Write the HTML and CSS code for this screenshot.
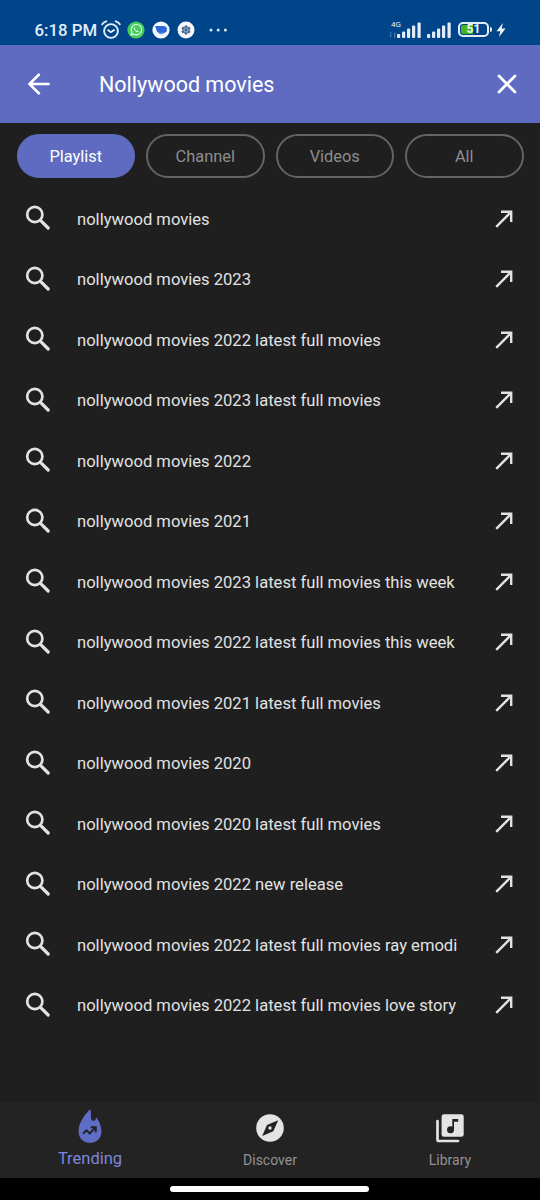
FILE: index.html
```html
<!DOCTYPE html>
<html lang="en">
<head>
<meta charset="utf-8">
<title>Search</title>
<link rel="stylesheet" href="styles.css">
</head>
<body>
<svg class="defs" width="0" height="0">
  <symbol id="search" viewBox="0 0 26 26"><circle cx="9.8" cy="9.5" r="7.6" fill="none" stroke="currentColor" stroke-width="2.7"/><path d="M15.5 15.3L23.2 23" stroke="currentColor" stroke-width="3.2" stroke-linecap="round"/></symbol>
  <symbol id="open" viewBox="0 0 18 18"><path d="M1.2 16.8L15.6 2.4M6 1.8H16.2V12" fill="none" stroke="currentColor" stroke-width="2.4"/></symbol>
</svg>
<div class="screen">
  <div class="status">
    <span class="time">6:18 PM</span>
    <svg class="alarm" width="20" height="20" viewBox="0 0 20 20" fill="none" stroke="#e3edf7" stroke-width="1.9" stroke-linecap="round"><circle cx="10" cy="11" r="6.9"/><path d="M1.2 4.3Q2.6 2 5.2 1.3M14.8 1.3Q17.4 2 18.8 4.3M7.2 10.2L9.8 12.2L12.9 10.1"/></svg>
    <svg class="whatsapp" width="18" height="18" viewBox="0 0 18 18"><circle cx="9" cy="9" r="8.6" fill="#45ce5e"/><path d="M4.1 13.9L4.9 11.2A5.2 5.2 0 1 1 6.9 13.2Z" fill="none" stroke="#e4f8e8" stroke-width="1.1"/><path d="M6.9 6.4Q6.3 7.8 8 9.7Q9.9 11.7 11.4 11.1L11.7 10.3L10.3 9.5L9.6 10.1Q8.3 9.5 7.9 8.3L8.4 7.7L7.7 6.2Z" fill="#e4f8e8"/></svg>
    <svg class="messages" width="18" height="18" viewBox="0 0 18 18"><circle cx="9" cy="9" r="8.6" fill="#f5f8ff"/><path d="M2.9 5H11.2Q15 5.2 15 8.4Q15 11.8 11.4 12H8Q4.5 11.8 4.2 8.3Q4.1 6.7 2.9 5Z" fill="#2e68d9"/><path d="M6.2 11.5Q9.5 12.4 12.6 11.5Q11.8 13.4 9.4 13.4Q7 13.4 6.2 11.5Z" fill="#77a2f2"/></svg>
    <svg class="gear" width="18" height="18" viewBox="0 0 18 18"><circle cx="9" cy="9" r="8.5" fill="#f5f7fa"/><path d="M9 4.4V13.6M5 6.7L13 11.3M13 6.7L5 11.3" stroke="#455d7b" stroke-width="2.2"/><circle cx="9" cy="9" r="3.1" fill="#7fa0cb" stroke="#526f94" stroke-width="1.2"/><circle cx="9" cy="9" r="1.2" fill="#425b7a"/></svg>
    <svg class="dots" width="19" height="4" viewBox="0 0 19 4" fill="#dce8f4"><circle cx="2" cy="2" r="1.5"/><circle cx="9.2" cy="2" r="1.5"/><circle cx="16.4" cy="2" r="1.5"/></svg>
    <span class="network"><span class="gen">4G</span><svg width="8" height="6" viewBox="0 0 8 6" fill="none" stroke="#4f81b5"><path d="M1.8 0V5L.4 3.6M5.6 6V1L7 2.4"/></svg></span>
    <svg class="signal" width="24" height="16" viewBox="0 0 24 16" fill="#e3edf7"><rect y="12" width="3.2" height="4" rx="1"/><rect x="5" y="9.5" width="3.2" height="6.5" rx="1"/><rect x="10" y="6.5" width="3.2" height="9.5" rx="1"/><rect x="15" y="3.5" width="3.2" height="12.5" rx="1"/><rect x="20.5" y=".5" width="3.2" height="15.5" rx="1"/></svg>
    <svg class="signal second" width="24" height="16" viewBox="0 0 24 16" fill="#e3edf7"><rect y="12" width="3.2" height="4" rx="1"/><rect x="5" y="9.5" width="3.2" height="6.5" rx="1"/><rect x="10" y="6.5" width="3.2" height="9.5" rx="1"/><rect x="15" y="3.5" width="3.2" height="12.5" rx="1"/><rect x="20.5" y=".5" width="3.2" height="15.5" rx="1"/></svg>
    <span class="battery">51</span><span class="nub"></span>
    <svg class="bolt" width="10" height="14" viewBox="0 0 10 14"><path d="M7 0L.4 8.2H4.4L3 14L9.6 5.6H5.6Z" fill="#f0f5fa"/></svg>
  </div>

  <header class="bar">
    <svg class="back" width="22" height="22" viewBox="0 0 22 22" fill="none" stroke="#fff" stroke-width="2.6" stroke-linecap="round" stroke-linejoin="round"><path d="M20.6 11H1.8M10.9 1.6L1.5 11L10.9 20.4"/></svg>
    <span class="query">Nollywood movies</span>
    <svg class="clear" width="20" height="20" viewBox="0 0 20 20" fill="none" stroke="#fff" stroke-width="2.8" stroke-linecap="round"><path d="M2 2L18 18M18 2L2 18"/></svg>
  </header>

  <div class="filters">
    <span class="pill active">Playlist</span><span class="pill">Channel</span><span class="pill">Videos</span><span class="pill">All</span>
  </div>

  <ul class="results">
    <li><svg class="search"><use href="#search"/></svg><span>nollywood movies</span><svg class="open"><use href="#open"/></svg></li>
    <li><svg class="search"><use href="#search"/></svg><span>nollywood movies 2023</span><svg class="open"><use href="#open"/></svg></li>
    <li><svg class="search"><use href="#search"/></svg><span>nollywood movies 2022 latest full movies</span><svg class="open"><use href="#open"/></svg></li>
    <li><svg class="search"><use href="#search"/></svg><span>nollywood movies 2023 latest full movies</span><svg class="open"><use href="#open"/></svg></li>
    <li><svg class="search"><use href="#search"/></svg><span>nollywood movies 2022</span><svg class="open"><use href="#open"/></svg></li>
    <li><svg class="search"><use href="#search"/></svg><span>nollywood movies 2021</span><svg class="open"><use href="#open"/></svg></li>
    <li><svg class="search"><use href="#search"/></svg><span>nollywood movies 2023 latest full movies this week</span><svg class="open"><use href="#open"/></svg></li>
    <li><svg class="search"><use href="#search"/></svg><span>nollywood movies 2022 latest full movies this week</span><svg class="open"><use href="#open"/></svg></li>
    <li><svg class="search"><use href="#search"/></svg><span>nollywood movies 2021 latest full movies</span><svg class="open"><use href="#open"/></svg></li>
    <li><svg class="search"><use href="#search"/></svg><span>nollywood movies 2020</span><svg class="open"><use href="#open"/></svg></li>
    <li><svg class="search"><use href="#search"/></svg><span>nollywood movies 2020 latest full movies</span><svg class="open"><use href="#open"/></svg></li>
    <li><svg class="search"><use href="#search"/></svg><span>nollywood movies 2022 new release</span><svg class="open"><use href="#open"/></svg></li>
    <li><svg class="search"><use href="#search"/></svg><span>nollywood movies 2022 latest full movies ray emodi</span><svg class="open"><use href="#open"/></svg></li>
    <li><svg class="search"><use href="#search"/></svg><span>nollywood movies 2022 latest full movies love story</span><svg class="open"><use href="#open"/></svg></li>
  </ul>

  <nav class="tabs">
    <div class="tab current">
      <svg width="24" height="34" viewBox="0 0 24 34"><path d="M11.2 1C5.6 7.2.6 14.6.6 22.2C.6 29.2 5.2 33.8 12 33.8C18.8 33.8 23.4 29.2 23.4 22.4C23.4 17.2 21.4 12.7 19 9.2Q18.3 8.2 17.9 9.6C17.4 11.8 15.8 12.5 14.2 11.6C12.5 10.5 13.2 5.8 12.8 1.5Q12.5-.2 11.2 1Z" fill="#5f6dc4"/><path d="M5 24.8L8.6 21.3L11.8 24.4L17.2 18.7M12.7 18.2H17.8V23.2" fill="none" stroke="#222" stroke-width="1.9"/></svg>
      <span>Trending</span>
    </div>
    <div class="tab">
      <svg width="28" height="28" viewBox="0 0 28 28"><circle cx="14" cy="14" r="13.8" fill="#e4e4e4"/><path d="M22.2 6.3L17.3 17.3L6.2 22L11 11Z" fill="#222"/><circle cx="14" cy="14" r="1.7" fill="#e4e4e4"/></svg>
      <span>Discover</span>
    </div>
    <div class="tab">
      <svg width="28" height="29" viewBox="0 0 28 29"><rect x="5.6" y=".3" width="22.1" height="22.5" rx="2.4" fill="#e4e4e4"/><path d="M1.5 7V25.5Q1.5 27 3 27H22" fill="none" stroke="#e4e4e4" stroke-width="2.7" stroke-linecap="round"/><circle cx="14.5" cy="15.7" r="3.5" fill="#222"/><path d="M16.3 16V5H22.2V7.8H18V16Z" fill="#222"/></svg>
      <span>Library</span>
    </div>
  </nav>
  <div class="system"><div class="handle"></div></div>
</div>
</body>
</html>
```
FILE: styles.css
```css
* { box-sizing: border-box; }
body { margin: 0; background: #1f1f1f; font-family: Roboto, sans-serif; }
svg { display: block; flex: none; }
.defs { position: absolute; }
.screen { width: 540px; height: 1200px; display: flex; flex-direction: column; background: #1f1f1f; overflow: hidden; }

.status { height: 45px; flex: none; background: #00448a; display: flex; align-items: center; padding: 14px 0 0 34.5px; color: #e3edf7; }
.time { width: 66.5px; font-size: 16.8px; font-weight: 500; line-height: 20px; white-space: nowrap; padding-top: 1px; }
.whatsapp { margin-left: 6px; }
.messages, .gear { margin-left: 7px; }
.dots { margin-left: 14px; }
.network { width: 11px; height: 17px; margin-left: 163px; display: flex; flex-direction: column; justify-content: space-between; font-size: 8px; line-height: 8px; }
.network svg { margin-left: -2px; }
.gen { white-space: nowrap; }
.signal { margin-left: -5px; }
.signal.second { margin-left: 6px; }
.battery { width: 31px; height: 15px; margin-left: 7px; border: 2px solid #e3edf7; border-radius: 5px; background: linear-gradient(90deg, #43b51d 50%, transparent 50%) content-box; padding: 1px; text-align: center; font-size: 12px; font-weight: 700; line-height: 9.5px; color: #f1f6fa; }
.nub { width: 2px; height: 5px; margin-left: 1px; background: #e3edf7; border-radius: 0 2px 2px 0; }
.bolt { margin-left: 4px; }

.bar { height: 77.5px; flex: none; background: #5e6bc0; display: flex; align-items: center; padding: 0 23px 0 27.5px; color: #fff; }
.query { flex: 1; margin: 3px 0 0 49.5px; font-size: 21.5px; line-height: 28px; }

.filters { height: 66px; flex: none; display: flex; gap: 11px; padding: 11px 16.5px 0; }
.pill { flex: 1; height: 44px; border: 2px solid #646464; border-radius: 22px; color: #8d8d8d; text-align: center; font-size: 16.4px; line-height: 41px; }
.pill.active { background: #5e6bc0; border-color: #5e6bc0; color: #fff; }

.results { list-style: none; margin: 0; padding: 0; flex: 1; }
.results li { height: 60.5px; display: flex; align-items: center; padding: 0 27px 0 25px; color: #e2e2e2; font-size: 16.58px; }
.results span { flex: 1; margin-left: 26px; line-height: 20px; padding-top: 2px; white-space: nowrap; }
.search { width: 26px; height: 26px; margin-top: -1px; }
.open { width: 18px; height: 18px; }

.tabs { height: 76px; flex: none; background: #232323; display: flex; }
.tab { flex: 1; display: flex; flex-direction: column; align-items: center; padding-top: 12px; color: #929292; font-size: 14px; }
.tab span { line-height: 18px; margin-top: auto; margin-bottom: 9px; }
.tab.current { padding-top: 6.5px; color: #7c87dc; font-size: 16.5px; }
.tab.current span { margin-bottom: 10px; }
.system { height: 22px; flex: none; background: #000; padding-top: 8px; }
.handle { width: 199px; height: 6px; margin-left: 170px; border-radius: 3px; background: #fff; }
```
